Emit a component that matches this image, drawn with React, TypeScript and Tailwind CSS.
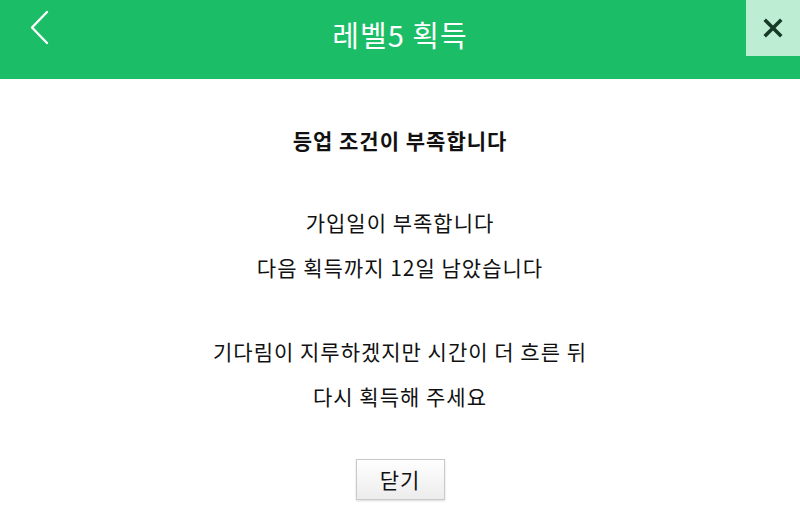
const font = { fontFamily: '"Noto Sans CJK KR", "Noto Sans", sans-serif' };

export default function App() {
    return (
        <div className="w-[800px] h-[505px] bg-white overflow-hidden" style={font}>
            {/* Header */}
            <header className="relative h-[79px] bg-[#1bbe67] flex items-center justify-center">
                <button className="absolute left-[22px] top-[8px] text-white">
                    <svg width="32" height="40" viewBox="0 0 32 40" fill="none" stroke="white" strokeWidth="2.4" strokeLinecap="round" strokeLinejoin="round">
                        <path d="M25 4 L10 19.5 L25 35" />
                    </svg>
                </button>
                <h1 className="text-white text-[29px] leading-none -mt-[11px] tracking-[1px]">레벨5 획득</h1>
                <button className="absolute right-0 top-0 w-[54px] h-[56px] bg-[#bdeed3] flex items-center justify-center">
                    <svg width="20" height="20" viewBox="0 0 20 20" stroke="#173a28" strokeWidth="3.6" strokeLinecap="square">
                        <path d="M3 3 L17 17 M17 3 L3 17" />
                    </svg>
                </button>
            </header>

            {/* Body */}
            <main className="flex flex-col items-center text-[#111] text-[21px] tracking-[1px]">
                <p className="font-bold mt-[48px] leading-[26px]">등업 조건이 부족합니다</p>
                <div className="mt-[47px] flex flex-col items-center leading-[45px]">
                    <p>가입일이 부족합니다</p>
                    <p>다음 획득까지 12일 남았습니다</p>
                </div>
                <div className="mt-[39px] flex flex-col items-center leading-[45px]">
                    <p>기다림이 지루하겠지만 시간이 더 흐른 뒤</p>
                    <p>다시 획득해 주세요</p>
                </div>
                <button className="mt-[40px] w-[89px] h-[41px] border border-[#c9c9c9] bg-gradient-to-b from-white to-[#ececec] shadow-[0_1px_2px_rgba(0,0,0,0.15)] text-[21px] text-[#111] flex items-center justify-center">
                    닫기
                </button>
            </main>
        </div>
    );
}
